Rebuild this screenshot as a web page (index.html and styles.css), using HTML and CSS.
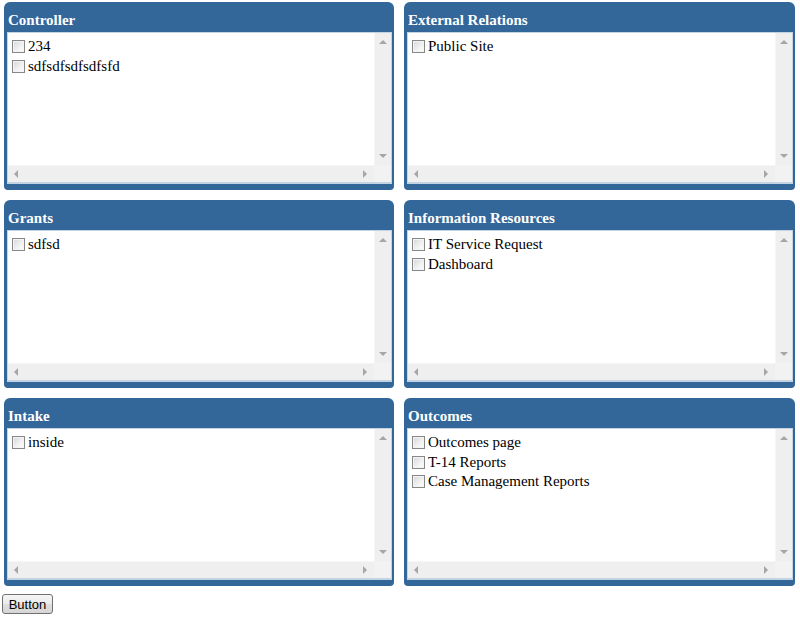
FILE: index.html
```html
<!DOCTYPE html>
<html>
<head>
<meta charset="utf-8">
<link rel="stylesheet" href="styles.css">
</head>
<body>
<div class="grid">
  <div class="panel">
    <div class="title">Controller</div>
    <div class="box">
      <div class="list">
        <div class="item"><span class="cb"></span>234</div>
        <div class="item"><span class="cb"></span>sdfsdfsdfsdfsfd</div>
      </div>
      <div class="vbar"><span class="arr up"></span><span class="arr down"></span></div>
      <div class="hbar"><span class="arr left"></span><span class="arr right"></span></div>
      <div class="corner"></div>
    </div>
  </div>
  <div class="panel">
    <div class="title">External Relations</div>
    <div class="box">
      <div class="list">
        <div class="item"><span class="cb"></span>Public Site</div>
      </div>
      <div class="vbar"><span class="arr up"></span><span class="arr down"></span></div>
      <div class="hbar"><span class="arr left"></span><span class="arr right"></span></div>
      <div class="corner"></div>
    </div>
  </div>
  <div class="panel">
    <div class="title">Grants</div>
    <div class="box">
      <div class="list">
        <div class="item"><span class="cb"></span>sdfsd</div>
      </div>
      <div class="vbar"><span class="arr up"></span><span class="arr down"></span></div>
      <div class="hbar"><span class="arr left"></span><span class="arr right"></span></div>
      <div class="corner"></div>
    </div>
  </div>
  <div class="panel">
    <div class="title">Information Resources</div>
    <div class="box">
      <div class="list">
        <div class="item"><span class="cb"></span>IT Service Request</div>
        <div class="item"><span class="cb"></span>Dashboard</div>
      </div>
      <div class="vbar"><span class="arr up"></span><span class="arr down"></span></div>
      <div class="hbar"><span class="arr left"></span><span class="arr right"></span></div>
      <div class="corner"></div>
    </div>
  </div>
  <div class="panel">
    <div class="title">Intake</div>
    <div class="box">
      <div class="list">
        <div class="item"><span class="cb"></span>inside</div>
      </div>
      <div class="vbar"><span class="arr up"></span><span class="arr down"></span></div>
      <div class="hbar"><span class="arr left"></span><span class="arr right"></span></div>
      <div class="corner"></div>
    </div>
  </div>
  <div class="panel">
    <div class="title">Outcomes</div>
    <div class="box">
      <div class="list">
        <div class="item"><span class="cb"></span>Outcomes page</div>
        <div class="item"><span class="cb"></span>T-14 Reports</div>
        <div class="item"><span class="cb"></span>Case Management Reports</div>
      </div>
      <div class="vbar"><span class="arr up"></span><span class="arr down"></span></div>
      <div class="hbar"><span class="arr left"></span><span class="arr right"></span></div>
      <div class="corner"></div>
    </div>
  </div>
</div>
<button class="btn" type="button">Button</button>
</body>
</html>
```
FILE: styles.css
```css
html, body {
  margin: 0;
  padding: 0;
  background: #ffffff;
}
body {
  padding: 2px 0 0 2px;
  font-family: "Liberation Serif", "Times New Roman", serif;
  color: #000;
}
.grid {
  margin-left: 2px;
  display: grid;
  grid-template-columns: 390px 391px;
  grid-auto-rows: 188px;
  column-gap: 10px;
  row-gap: 10px;
}
.panel {
  background: #336699;
  border-radius: 6px 6px 4px 4px;
  padding: 0 2px 6px 3px;
  display: flex;
  flex-direction: column;
  box-sizing: border-box;
}
.title {
  height: 30px;
  box-sizing: border-box;
  padding: 10px 0 0 1px;
  color: #ffffff;
  font-weight: bold;
  font-size: 15px;
  line-height: 17px;
  white-space: nowrap;
}
.box {
  flex: 1;
  border: 1px solid #c4d3e2;
  border-bottom-width: 2px;
  background: #ffffff;
  display: grid;
  grid-template-columns: 1fr 17px;
  grid-template-rows: 1fr 17px;
  min-height: 0;
}
.list {
  padding-top: 4px;
  font-size: 15px;
  overflow: hidden;
}
.item {
  height: 19.5px;
  display: flex;
  align-items: center;
  white-space: nowrap;
}
.cb {
  width: 11px;
  height: 11px;
  margin: 0 3px 0 4px;
  border: 1px solid #868787;
  background: linear-gradient(135deg, #d6d6d6 0%, #f2f2f2 60%, #ffffff 100%);
  box-shadow: inset 0 0 0 1px #f4f4f4;
  flex: none;
}
.vbar {
  background: #efefef;
  border-left: 1px solid #f6f6f6;
  display: flex;
  flex-direction: column;
  justify-content: space-between;
  align-items: center;
  padding: 7px 0;
}
.hbar {
  background: #efefef;
  border-top: 1px solid #f6f6f6;
  display: flex;
  justify-content: space-between;
  align-items: center;
  padding: 0 7px 0 6px;
}
.corner {
  background: #f2f2f2;
}
.arr {
  width: 0;
  height: 0;
  display: block;
}
.up {
  border-left: 4px solid transparent;
  border-right: 4px solid transparent;
  border-bottom: 4px solid #a6a6a6;
}
.down {
  border-left: 4px solid transparent;
  border-right: 4px solid transparent;
  border-top: 4px solid #a6a6a6;
}
.left {
  border-top: 4px solid transparent;
  border-bottom: 4px solid transparent;
  border-right: 4px solid #a6a6a6;
}
.right {
  border-top: 4px solid transparent;
  border-bottom: 4px solid transparent;
  border-left: 4px solid #a6a6a6;
}
.btn {
  display: block;
  margin-top: 8px;
  width: 51px;
  height: 20px;
  padding: 0;
  font-family: "Liberation Sans", Arial, sans-serif;
  font-size: 13px;
  color: #000;
  border: 1px solid #707070;
  border-radius: 3px;
  background: linear-gradient(to bottom, #f6f6f6 0%, #ebebeb 48%, #dedede 52%, #d6d6d6 100%);
}
```
